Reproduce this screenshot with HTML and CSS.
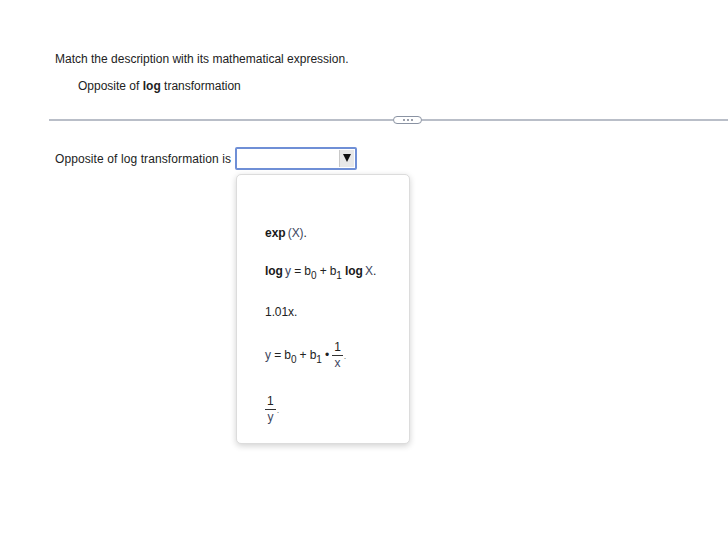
FILE: index.html
```html
<!DOCTYPE html>
<html>
<head>
<meta charset="utf-8">
<link rel="stylesheet" href="styles.css">
</head>
<body>
<div class="page">
  <div class="intro">
    <p class="title">Match the description with its mathematical expression.</p>
    <p class="desc">Opposite of <b>log</b> transformation</p>
  </div>
  <div class="divider">
    <span class="line short"></span>
    <span class="pill"><i></i><i></i><i></i></span>
    <span class="line"></span>
  </div>
  <div class="question">
    <span class="qtext">Opposite of log transformation is</span>
    <div class="selwrap">
      <span class="select"><span class="arrow"></span></span>
      <div class="menu">
        <div class="opt"><b>exp</b>&thinsp;<span class="v">(X)</span>.</div>
        <div class="opt"><b>log</b>&thinsp;<span class="v">y</span> = b<sub>0</sub> + b<sub>1</sub> <b>log</b>&thinsp;<span class="v">X</span>.</div>
        <div class="opt">1.01x.</div>
        <div class="opt frow"><span class="v">y</span> = b<sub>0</sub> + b<sub>1</sub> &bull;<span class="frac"><span class="num">1</span><span class="den v">x</span></span><span class="dot">.</span></div>
        <div class="opt frow"><span class="frac first"><span class="num">1</span><span class="den v">y</span></span><span class="dot">.</span></div>
      </div>
    </div>
  </div>
</div>
</body>
</html>
```

FILE: styles.css
```css
html, body {
  margin: 0;
  padding: 0;
  background: #ffffff;
}
body {
  font-family: "Liberation Sans", Arial, sans-serif;
  font-size: 12px;
  color: #222;
}
.page {
  width: 728px;
  height: 549px;
  position: relative;
  overflow: hidden;
}
.intro {
  padding: 52px 0 0 55px;
}
.intro p {
  margin: 0;
  line-height: 14px;
}
.desc {
  margin-top: 13px !important;
  padding-left: 23px;
}
.divider {
  display: flex;
  align-items: center;
  margin: 22px 0 0 49px;
  height: 10px;
}
.line {
  flex: 1;
  height: 2px;
  background: #b9bec8;
}
.line.short {
  flex: 0 0 344px;
}
.pill {
  width: 27px;
  height: 6px;
  border: 1.5px solid #8a93a3;
  border-radius: 4px;
  background: #fff;
  display: flex;
  align-items: center;
  justify-content: center;
  gap: 2px;
}
.pill i {
  width: 2px;
  height: 2px;
  background: #7a8090;
  border-radius: 50%;
}
.question {
  display: flex;
  align-items: center;
  margin: 22px 0 0 55px;
}
.qtext {
  margin-right: 4px;
  letter-spacing: 0.1px;
}
.selwrap {
  position: relative;
}
.select {
  width: 117px;
  height: 19px;
  border: 2px solid #6f8fd6;
  border-radius: 2px;
  display: flex;
  justify-content: flex-end;
  align-items: center;
  padding-right: 1px;
  box-sizing: content-box;
}
.arrow {
  width: 14px;
  height: 17px;
  background: #e8e8e8;
  border-left: 1px solid #c9c9c9;
  position: relative;
}
.arrow::after {
  content: "";
  position: absolute;
  left: 3px;
  top: 4px;
  border-left: 4.5px solid transparent;
  border-right: 4.5px solid transparent;
  border-top: 8px solid #111;
}
.menu {
  position: absolute;
  left: 1px;
  top: 27px;
  width: 174px;
  height: 270px;
  border: 1px solid #dcdcdc;
  border-radius: 5px;
  background: #fff;
  box-shadow: 0 2px 6px rgba(0,0,0,0.18);
  box-sizing: border-box;
  padding: 51px 0 0 28px;
  letter-spacing: -0.1px;
  color: #222;
}
.opt {
  height: 14px;
  line-height: 14px;
  margin-bottom: 24px;
  white-space: nowrap;
}
.opt:nth-child(2) { margin-bottom: 27px; }
.opt:nth-child(3) { margin-bottom: 19px; }
.opt:nth-child(4) { margin-bottom: 20px; }
.opt b {
  font-weight: bold;
  color: #1a1a1a;
}
.v {
  color: #3d4660;
}
sub {
  font-size: 10px;
  vertical-align: -4px;
  line-height: 0;
}
.frow {
  height: 34px;
  line-height: 34px;
}
.frac {
  display: inline-block;
  vertical-align: middle;
  text-align: center;
  margin-left: 3px;
  line-height: 13px;
}
.frac.first {
  margin-left: 0;
}
.num {
  display: block;
  border-bottom: 1px solid #333;
  padding: 0 2px 1px;
}
.den {
  display: block;
  padding-top: 1px;
}
.dot {
  font-size: 9px;
  color: #777;
  margin-left: 1px;
}
```
